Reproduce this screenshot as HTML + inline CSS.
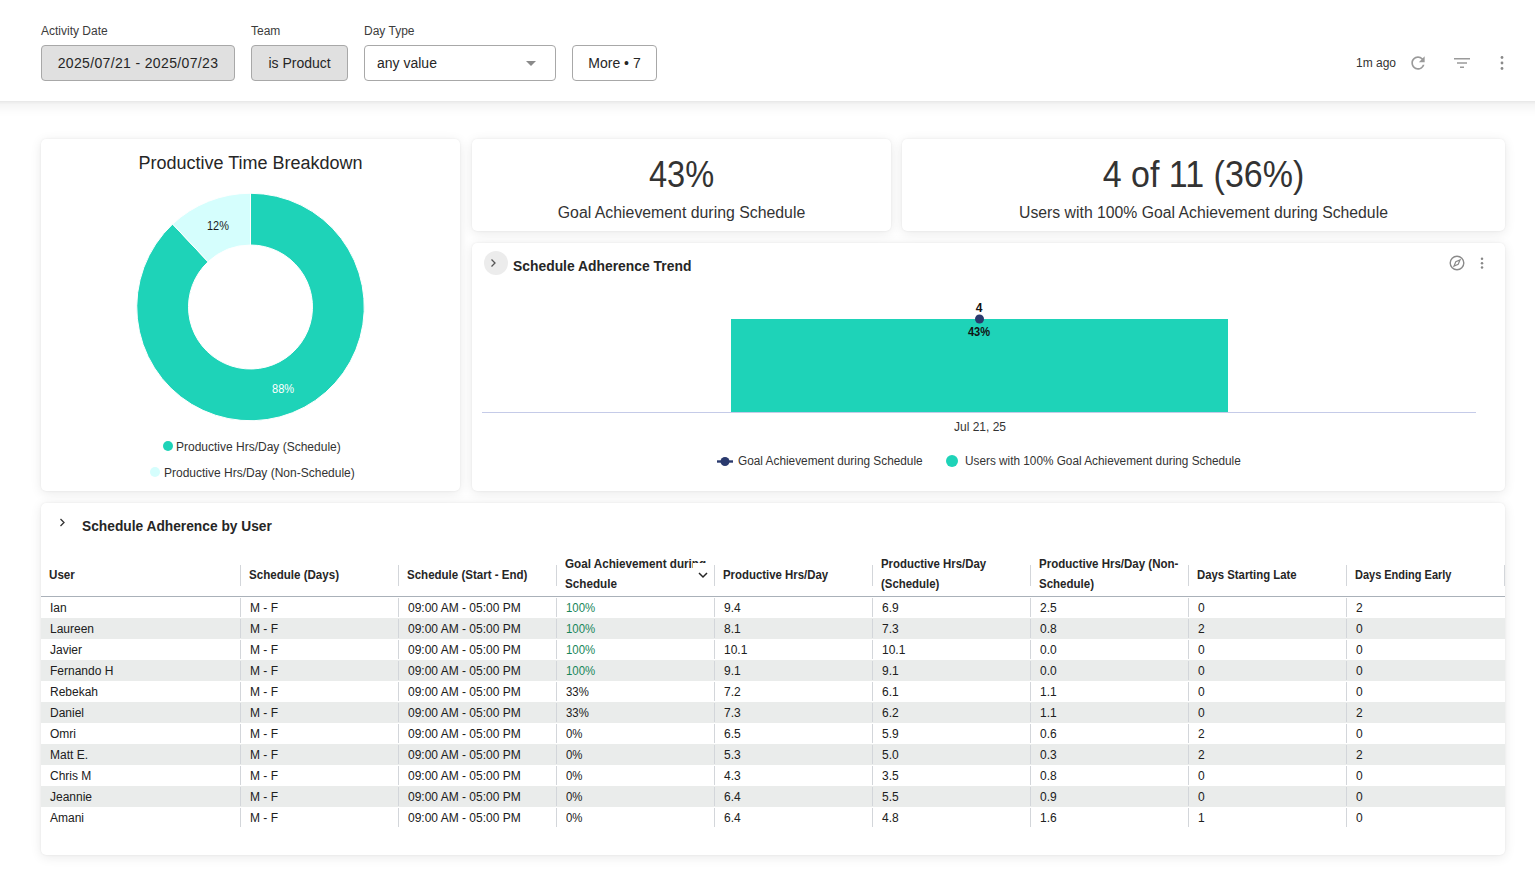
<!DOCTYPE html>
<html><head><meta charset="utf-8">
<style>
*{box-sizing:border-box;margin:0;padding:0}
html,body{width:1535px;height:879px;overflow:hidden;background:#fff;font-family:"Liberation Sans",sans-serif;color:#262626}
.abs{position:absolute}
#hdr{position:absolute;left:0;top:0;width:1535px;height:101px;background:#fff;z-index:2}
#hdr::before{content:"";position:absolute;left:-40px;top:0;width:1615px;height:101px;background:#fff;box-shadow:0 1px 3px rgba(0,0,0,0.05),0 3px 14px rgba(0,0,0,0.09);z-index:-1}
.lbl{position:absolute;font-size:12px;color:#3c3c3c;top:24px;line-height:14px;white-space:nowrap}
.chip{position:absolute;top:45px;height:36px;border:1px solid #a8a8a8;border-radius:4px;font-size:14px;line-height:34px;white-space:nowrap;color:#262626}
.gray{background:#e0e0e0;text-align:center}
.card{position:absolute;background:#fff;border-radius:5px;box-shadow:0 0 2px rgba(0,0,0,0.08),0 2px 12px rgba(0,0,0,0.09)}
.t{position:absolute;white-space:nowrap;line-height:1}
.th{font-size:12px;font-weight:bold;color:#262626;transform-origin:0 0}
.td{font-size:12px;color:#202020}
.grn{color:#17865a}
.hs{top:565px;width:1px;height:21px;background:#d3d6da}
.bs{width:1px;height:19px;background:#d3d6da}
</style></head><body>
<div id="hdr">
  <div class="lbl" style="left:41px">Activity Date</div>
  <div class="chip gray" style="left:41px;width:194px;letter-spacing:0.35px">2025/07/21 - 2025/07/23</div>
  <div class="lbl" style="left:251px">Team</div>
  <div class="chip gray" style="left:251px;width:97px">is Product</div>
  <div class="lbl" style="left:364px">Day Type</div>
  <div class="chip" style="left:364px;width:192px;padding-left:12px">any value
    <div class="abs" style="left:161px;top:15px;width:0;height:0;border-left:5px solid transparent;border-right:5px solid transparent;border-top:5px solid #8a8a8a"></div>
  </div>
  <div class="chip" style="left:572px;width:85px;text-align:center">More &bull; 7</div>
  <div class="t" style="left:1356px;top:57px;font-size:12px;color:#333">1m ago</div>
  <svg class="abs" style="left:1408px;top:53px" width="20" height="20" viewBox="0 0 24 24"><path fill="#9a9a9a" d="M17.65 6.35A7.958 7.958 0 0 0 12 4c-4.42 0-7.99 3.58-7.99 8s3.57 8 7.99 8c3.73 0 6.84-2.55 7.73-6h-2.08A5.99 5.99 0 0 1 12 18c-3.31 0-6-2.69-6-6s2.69-6 6-6c1.66 0 3.14.69 4.22 1.78L13 11h7V4l-2.35 2.35z"/></svg>
  <svg class="abs" style="left:1450px;top:51px" width="24" height="24" viewBox="0 0 24 24"><path fill="#9a9a9a" d="M4 7h16v1.6H4zM7 11.2h10v1.6H7zM10 15.4h4V17h-4z"/></svg>
  <svg class="abs" style="left:1490px;top:51px" width="24" height="24" viewBox="0 0 24 24"><circle cx="12" cy="6.5" r="1.4" fill="#8a8a8a"/><circle cx="12" cy="12" r="1.4" fill="#8a8a8a"/><circle cx="12" cy="17.5" r="1.4" fill="#8a8a8a"/></svg>
</div>

<!-- cards -->
<div class="card" style="left:41px;top:139px;width:419px;height:352px"></div>
<div class="card" style="left:472px;top:139px;width:419px;height:92px"></div>
<div class="card" style="left:902px;top:139px;width:603px;height:92px"></div>
<div class="card" style="left:472px;top:243px;width:1033px;height:248px"></div>
<div class="card" style="left:41px;top:503px;width:1464px;height:352px"></div>

<!-- donut card -->
<div class="t" style="left:41px;width:419px;text-align:center;top:154px;font-size:18px;color:#262626">Productive Time Breakdown</div>
<svg class="abs" style="left:0;top:0" width="460" height="491">
  <path fill="#1ed3b8" stroke="#fff" stroke-width="1" d="M250.5 193.25 A113.75 113.75 0 1 1 172.63 224.08 L208.06 261.80 A62 62 0 1 0 250.5 245 Z"/>
  <path fill="#d5fefd" stroke="#fff" stroke-width="1" d="M172.63 224.08 A113.75 113.75 0 0 1 250.5 193.25 L250.5 245 A62 62 0 0 0 208.06 261.80 Z"/>
  <circle cx="168" cy="446" r="5" fill="#1ed3b8"/>
  <circle cx="155" cy="472" r="5" fill="#d5fefd"/>
</svg>
<div class="t" style="left:207px;top:220px;font-size:12px;color:#1a1a1a;transform:scaleX(0.91);transform-origin:0 0">12%</div>
<div class="t" style="left:272px;top:383px;font-size:12px;color:#fff;transform:scaleX(0.92);transform-origin:0 0">88%</div>
<div class="t" style="left:176px;top:441px;font-size:12px;color:#333">Productive Hrs/Day (Schedule)</div>
<div class="t" style="left:164px;top:467px;font-size:12px;color:#333">Productive Hrs/Day (Non-Schedule)</div>

<!-- KPI cards -->
<div class="t" style="left:472px;width:419px;text-align:center;top:157px;font-size:36px;color:#333;transform:scaleX(0.904)">43%</div>
<div class="t" style="left:472px;width:419px;text-align:center;top:205px;font-size:16px;color:#333;transform:scaleX(0.99)">Goal Achievement during Schedule</div>
<div class="t" style="left:902px;width:603px;text-align:center;top:157px;font-size:36px;color:#333;transform:scaleX(0.944)">4 of 11 (36%)</div>
<div class="t" style="left:902px;width:603px;text-align:center;top:205px;font-size:16px;color:#333;transform:scaleX(0.985)">Users with 100% Goal Achievement during Schedule</div>

<!-- chart card -->
<div class="abs" style="left:484px;top:251px;width:24px;height:24px;border-radius:50%;background:#ececec"></div>
<svg class="abs" style="left:484px;top:251px" width="24" height="24"><path d="M8.5 8.5 L12 12 L8.5 15.5" transform="translate(-1,0)" fill="none" stroke="#555" stroke-width="1.3"/></svg>
<div class="t" style="left:513px;top:257.5px;font-size:15px;font-weight:bold;color:#262626;transform:scaleX(0.925);transform-origin:0 0">Schedule Adherence Trend</div>
<svg class="abs" style="left:1445px;top:251px" width="24" height="24" viewBox="0 0 24 24"><circle cx="12" cy="12" r="6.8" fill="none" stroke="#8a8a8a" stroke-width="1.4"/><path d="M15 9 L13.2 13.2 L9 15 L10.8 10.8 Z" fill="none" stroke="#8a8a8a" stroke-width="1.2"/></svg>
<svg class="abs" style="left:1470px;top:251px" width="24" height="24" viewBox="0 0 24 24"><circle cx="12" cy="7.8" r="1.25" fill="#888"/><circle cx="12" cy="12.2" r="1.25" fill="#888"/><circle cx="12" cy="16.5" r="1.25" fill="#888"/></svg>
<div class="abs" style="left:731px;top:319px;width:497px;height:93px;background:#1ed3b8"></div>
<div class="abs" style="left:482px;top:412px;width:994px;height:1px;background:#c5cbe8"></div>
<svg class="abs" style="left:970px;top:310px" width="20" height="20"><circle cx="9.5" cy="9" r="4.5" fill="#2a3a6e"/></svg>
<div class="t" style="left:929px;width:100px;text-align:center;top:302px;font-size:12px;font-weight:bold;color:#111">4</div>
<div class="t" style="left:929px;width:100px;text-align:center;top:326px;font-size:12px;font-weight:bold;color:#111;transform:scaleX(0.92)">43%</div>
<div class="t" style="left:954px;top:421px;font-size:12px;color:#333">Jul 21, 25</div>
<svg class="abs" style="left:710px;top:450px" width="30" height="24"><path d="M7 11.5 H23" stroke="#2a3a6e" stroke-width="2.4"/><circle cx="15" cy="11.5" r="4.5" fill="#2a3a6e"/></svg>
<div class="t" style="left:738px;top:455px;font-size:12px;color:#333;transform:scaleX(0.985);transform-origin:0 0">Goal Achievement during Schedule</div>
<div class="abs" style="left:946px;top:455px;width:12px;height:12px;border-radius:50%;background:#1ed3b8"></div>
<div class="t" style="left:965px;top:455px;font-size:12px;color:#333;transform:scaleX(0.982);transform-origin:0 0">Users with 100% Goal Achievement during Schedule</div>

<!-- table card -->
<svg class="abs" style="left:52px;top:511px" width="24" height="24"><path d="M8.5 8.5 L12 12 L8.5 15.5" transform="translate(0,-0.5)" fill="none" stroke="#333" stroke-width="1.3"/></svg>
<div class="t" style="left:82px;top:518px;font-size:15px;font-weight:bold;color:#262626;transform:scaleX(0.917);transform-origin:0 0">Schedule Adherence by User</div>
<div class="abs" style="left:41px;top:618px;width:1464px;height:21px;background:#eaeceb"></div>
<div class="abs" style="left:41px;top:660px;width:1464px;height:21px;background:#eaeceb"></div>
<div class="abs" style="left:41px;top:702px;width:1464px;height:21px;background:#eaeceb"></div>
<div class="abs" style="left:41px;top:744px;width:1464px;height:21px;background:#eaeceb"></div>
<div class="abs" style="left:41px;top:786px;width:1464px;height:21px;background:#eaeceb"></div>
<div class="abs hs" style="left:240px"></div>
<div class="abs hs" style="left:398px"></div>
<div class="abs hs" style="left:556px"></div>
<div class="abs hs" style="left:714px"></div>
<div class="abs hs" style="left:872px"></div>
<div class="abs hs" style="left:1030px"></div>
<div class="abs hs" style="left:1188px"></div>
<div class="abs hs" style="left:1346px"></div>
<div class="abs hs" style="left:1504px"></div>
<div class="abs bs" style="left:240px;top:598px"></div>
<div class="abs bs" style="left:398px;top:598px"></div>
<div class="abs bs" style="left:556px;top:598px"></div>
<div class="abs bs" style="left:714px;top:598px"></div>
<div class="abs bs" style="left:872px;top:598px"></div>
<div class="abs bs" style="left:1030px;top:598px"></div>
<div class="abs bs" style="left:1188px;top:598px"></div>
<div class="abs bs" style="left:1346px;top:598px"></div>
<div class="abs bs" style="left:240px;top:619px"></div>
<div class="abs bs" style="left:398px;top:619px"></div>
<div class="abs bs" style="left:556px;top:619px"></div>
<div class="abs bs" style="left:714px;top:619px"></div>
<div class="abs bs" style="left:872px;top:619px"></div>
<div class="abs bs" style="left:1030px;top:619px"></div>
<div class="abs bs" style="left:1188px;top:619px"></div>
<div class="abs bs" style="left:1346px;top:619px"></div>
<div class="abs bs" style="left:240px;top:640px"></div>
<div class="abs bs" style="left:398px;top:640px"></div>
<div class="abs bs" style="left:556px;top:640px"></div>
<div class="abs bs" style="left:714px;top:640px"></div>
<div class="abs bs" style="left:872px;top:640px"></div>
<div class="abs bs" style="left:1030px;top:640px"></div>
<div class="abs bs" style="left:1188px;top:640px"></div>
<div class="abs bs" style="left:1346px;top:640px"></div>
<div class="abs bs" style="left:240px;top:661px"></div>
<div class="abs bs" style="left:398px;top:661px"></div>
<div class="abs bs" style="left:556px;top:661px"></div>
<div class="abs bs" style="left:714px;top:661px"></div>
<div class="abs bs" style="left:872px;top:661px"></div>
<div class="abs bs" style="left:1030px;top:661px"></div>
<div class="abs bs" style="left:1188px;top:661px"></div>
<div class="abs bs" style="left:1346px;top:661px"></div>
<div class="abs bs" style="left:240px;top:682px"></div>
<div class="abs bs" style="left:398px;top:682px"></div>
<div class="abs bs" style="left:556px;top:682px"></div>
<div class="abs bs" style="left:714px;top:682px"></div>
<div class="abs bs" style="left:872px;top:682px"></div>
<div class="abs bs" style="left:1030px;top:682px"></div>
<div class="abs bs" style="left:1188px;top:682px"></div>
<div class="abs bs" style="left:1346px;top:682px"></div>
<div class="abs bs" style="left:240px;top:703px"></div>
<div class="abs bs" style="left:398px;top:703px"></div>
<div class="abs bs" style="left:556px;top:703px"></div>
<div class="abs bs" style="left:714px;top:703px"></div>
<div class="abs bs" style="left:872px;top:703px"></div>
<div class="abs bs" style="left:1030px;top:703px"></div>
<div class="abs bs" style="left:1188px;top:703px"></div>
<div class="abs bs" style="left:1346px;top:703px"></div>
<div class="abs bs" style="left:240px;top:724px"></div>
<div class="abs bs" style="left:398px;top:724px"></div>
<div class="abs bs" style="left:556px;top:724px"></div>
<div class="abs bs" style="left:714px;top:724px"></div>
<div class="abs bs" style="left:872px;top:724px"></div>
<div class="abs bs" style="left:1030px;top:724px"></div>
<div class="abs bs" style="left:1188px;top:724px"></div>
<div class="abs bs" style="left:1346px;top:724px"></div>
<div class="abs bs" style="left:240px;top:745px"></div>
<div class="abs bs" style="left:398px;top:745px"></div>
<div class="abs bs" style="left:556px;top:745px"></div>
<div class="abs bs" style="left:714px;top:745px"></div>
<div class="abs bs" style="left:872px;top:745px"></div>
<div class="abs bs" style="left:1030px;top:745px"></div>
<div class="abs bs" style="left:1188px;top:745px"></div>
<div class="abs bs" style="left:1346px;top:745px"></div>
<div class="abs bs" style="left:240px;top:766px"></div>
<div class="abs bs" style="left:398px;top:766px"></div>
<div class="abs bs" style="left:556px;top:766px"></div>
<div class="abs bs" style="left:714px;top:766px"></div>
<div class="abs bs" style="left:872px;top:766px"></div>
<div class="abs bs" style="left:1030px;top:766px"></div>
<div class="abs bs" style="left:1188px;top:766px"></div>
<div class="abs bs" style="left:1346px;top:766px"></div>
<div class="abs bs" style="left:240px;top:787px"></div>
<div class="abs bs" style="left:398px;top:787px"></div>
<div class="abs bs" style="left:556px;top:787px"></div>
<div class="abs bs" style="left:714px;top:787px"></div>
<div class="abs bs" style="left:872px;top:787px"></div>
<div class="abs bs" style="left:1030px;top:787px"></div>
<div class="abs bs" style="left:1188px;top:787px"></div>
<div class="abs bs" style="left:1346px;top:787px"></div>
<div class="abs bs" style="left:240px;top:808px"></div>
<div class="abs bs" style="left:398px;top:808px"></div>
<div class="abs bs" style="left:556px;top:808px"></div>
<div class="abs bs" style="left:714px;top:808px"></div>
<div class="abs bs" style="left:872px;top:808px"></div>
<div class="abs bs" style="left:1030px;top:808px"></div>
<div class="abs bs" style="left:1188px;top:808px"></div>
<div class="abs bs" style="left:1346px;top:808px"></div>
<div class="abs" style="left:41px;top:596px;width:1464px;height:1px;background:#aab1b9"></div>
<div class="t th" style="left:49px;top:569px;transform:scaleX(0.968)">User</div>
<div class="t th" style="left:249px;top:569px;transform:scaleX(0.964)">Schedule (Days)</div>
<div class="t th" style="left:407px;top:569px;transform:scaleX(0.96)">Schedule (Start - End)</div>
<div class="t th" style="left:565px;top:558px;transform:scaleX(0.974)">Goal Achievement during</div>
<div class="t th" style="left:565px;top:578px;transform:scaleX(0.974)">Schedule</div>
<div class="t th" style="left:723px;top:569px;transform:scaleX(0.95)">Productive Hrs/Day</div>
<div class="t th" style="left:881px;top:558px;transform:scaleX(0.95)">Productive Hrs/Day</div>
<div class="t th" style="left:881px;top:578px;transform:scaleX(0.95)">(Schedule)</div>
<div class="t th" style="left:1039px;top:558px;transform:scaleX(0.959)">Productive Hrs/Day (Non-</div>
<div class="t th" style="left:1039px;top:578px;transform:scaleX(0.959)">Schedule)</div>
<div class="t th" style="left:1197px;top:569px;transform:scaleX(0.945)">Days Starting Late</div>
<div class="t th" style="left:1355px;top:569px;transform:scaleX(0.915)">Days Ending Early</div>
<div class="t td" style="left:50px;top:602px">Ian</div>
<div class="t td" style="left:250px;top:602px">M - F</div>
<div class="t td" style="left:408px;top:602px">09:00 AM - 05:00 PM</div>
<div class="t td grn" style="left:566px;top:602px;transform:scaleX(0.95);transform-origin:0 0">100%</div>
<div class="t td" style="left:724px;top:602px">9.4</div>
<div class="t td" style="left:882px;top:602px">6.9</div>
<div class="t td" style="left:1040px;top:602px">2.5</div>
<div class="t td" style="left:1198px;top:602px">0</div>
<div class="t td" style="left:1356px;top:602px">2</div>
<div class="t td" style="left:50px;top:623px">Laureen</div>
<div class="t td" style="left:250px;top:623px">M - F</div>
<div class="t td" style="left:408px;top:623px">09:00 AM - 05:00 PM</div>
<div class="t td grn" style="left:566px;top:623px;transform:scaleX(0.95);transform-origin:0 0">100%</div>
<div class="t td" style="left:724px;top:623px">8.1</div>
<div class="t td" style="left:882px;top:623px">7.3</div>
<div class="t td" style="left:1040px;top:623px">0.8</div>
<div class="t td" style="left:1198px;top:623px">2</div>
<div class="t td" style="left:1356px;top:623px">0</div>
<div class="t td" style="left:50px;top:644px">Javier</div>
<div class="t td" style="left:250px;top:644px">M - F</div>
<div class="t td" style="left:408px;top:644px">09:00 AM - 05:00 PM</div>
<div class="t td grn" style="left:566px;top:644px;transform:scaleX(0.95);transform-origin:0 0">100%</div>
<div class="t td" style="left:724px;top:644px">10.1</div>
<div class="t td" style="left:882px;top:644px">10.1</div>
<div class="t td" style="left:1040px;top:644px">0.0</div>
<div class="t td" style="left:1198px;top:644px">0</div>
<div class="t td" style="left:1356px;top:644px">0</div>
<div class="t td" style="left:50px;top:665px">Fernando H</div>
<div class="t td" style="left:250px;top:665px">M - F</div>
<div class="t td" style="left:408px;top:665px">09:00 AM - 05:00 PM</div>
<div class="t td grn" style="left:566px;top:665px;transform:scaleX(0.95);transform-origin:0 0">100%</div>
<div class="t td" style="left:724px;top:665px">9.1</div>
<div class="t td" style="left:882px;top:665px">9.1</div>
<div class="t td" style="left:1040px;top:665px">0.0</div>
<div class="t td" style="left:1198px;top:665px">0</div>
<div class="t td" style="left:1356px;top:665px">0</div>
<div class="t td" style="left:50px;top:686px">Rebekah</div>
<div class="t td" style="left:250px;top:686px">M - F</div>
<div class="t td" style="left:408px;top:686px">09:00 AM - 05:00 PM</div>
<div class="t td" style="left:566px;top:686px;transform:scaleX(0.95);transform-origin:0 0">33%</div>
<div class="t td" style="left:724px;top:686px">7.2</div>
<div class="t td" style="left:882px;top:686px">6.1</div>
<div class="t td" style="left:1040px;top:686px">1.1</div>
<div class="t td" style="left:1198px;top:686px">0</div>
<div class="t td" style="left:1356px;top:686px">0</div>
<div class="t td" style="left:50px;top:707px">Daniel</div>
<div class="t td" style="left:250px;top:707px">M - F</div>
<div class="t td" style="left:408px;top:707px">09:00 AM - 05:00 PM</div>
<div class="t td" style="left:566px;top:707px;transform:scaleX(0.95);transform-origin:0 0">33%</div>
<div class="t td" style="left:724px;top:707px">7.3</div>
<div class="t td" style="left:882px;top:707px">6.2</div>
<div class="t td" style="left:1040px;top:707px">1.1</div>
<div class="t td" style="left:1198px;top:707px">0</div>
<div class="t td" style="left:1356px;top:707px">2</div>
<div class="t td" style="left:50px;top:728px">Omri</div>
<div class="t td" style="left:250px;top:728px">M - F</div>
<div class="t td" style="left:408px;top:728px">09:00 AM - 05:00 PM</div>
<div class="t td" style="left:566px;top:728px;transform:scaleX(0.95);transform-origin:0 0">0%</div>
<div class="t td" style="left:724px;top:728px">6.5</div>
<div class="t td" style="left:882px;top:728px">5.9</div>
<div class="t td" style="left:1040px;top:728px">0.6</div>
<div class="t td" style="left:1198px;top:728px">2</div>
<div class="t td" style="left:1356px;top:728px">0</div>
<div class="t td" style="left:50px;top:749px">Matt E.</div>
<div class="t td" style="left:250px;top:749px">M - F</div>
<div class="t td" style="left:408px;top:749px">09:00 AM - 05:00 PM</div>
<div class="t td" style="left:566px;top:749px;transform:scaleX(0.95);transform-origin:0 0">0%</div>
<div class="t td" style="left:724px;top:749px">5.3</div>
<div class="t td" style="left:882px;top:749px">5.0</div>
<div class="t td" style="left:1040px;top:749px">0.3</div>
<div class="t td" style="left:1198px;top:749px">2</div>
<div class="t td" style="left:1356px;top:749px">2</div>
<div class="t td" style="left:50px;top:770px">Chris M</div>
<div class="t td" style="left:250px;top:770px">M - F</div>
<div class="t td" style="left:408px;top:770px">09:00 AM - 05:00 PM</div>
<div class="t td" style="left:566px;top:770px;transform:scaleX(0.95);transform-origin:0 0">0%</div>
<div class="t td" style="left:724px;top:770px">4.3</div>
<div class="t td" style="left:882px;top:770px">3.5</div>
<div class="t td" style="left:1040px;top:770px">0.8</div>
<div class="t td" style="left:1198px;top:770px">0</div>
<div class="t td" style="left:1356px;top:770px">0</div>
<div class="t td" style="left:50px;top:791px">Jeannie</div>
<div class="t td" style="left:250px;top:791px">M - F</div>
<div class="t td" style="left:408px;top:791px">09:00 AM - 05:00 PM</div>
<div class="t td" style="left:566px;top:791px;transform:scaleX(0.95);transform-origin:0 0">0%</div>
<div class="t td" style="left:724px;top:791px">6.4</div>
<div class="t td" style="left:882px;top:791px">5.5</div>
<div class="t td" style="left:1040px;top:791px">0.9</div>
<div class="t td" style="left:1198px;top:791px">0</div>
<div class="t td" style="left:1356px;top:791px">0</div>
<div class="t td" style="left:50px;top:812px">Amani</div>
<div class="t td" style="left:250px;top:812px">M - F</div>
<div class="t td" style="left:408px;top:812px">09:00 AM - 05:00 PM</div>
<div class="t td" style="left:566px;top:812px;transform:scaleX(0.95);transform-origin:0 0">0%</div>
<div class="t td" style="left:724px;top:812px">6.4</div>
<div class="t td" style="left:882px;top:812px">4.8</div>
<div class="t td" style="left:1040px;top:812px">1.6</div>
<div class="t td" style="left:1198px;top:812px">1</div>
<div class="t td" style="left:1356px;top:812px">0</div>
<div class="abs" style="left:693px;top:563px;width:20px;height:30px;background:#fff"></div>
<svg class="abs" style="left:693px;top:565px" width="20" height="20"><path d="M6 8 L10 12 L14 8" fill="none" stroke="#262626" stroke-width="1.5"/></svg>
</body></html>
